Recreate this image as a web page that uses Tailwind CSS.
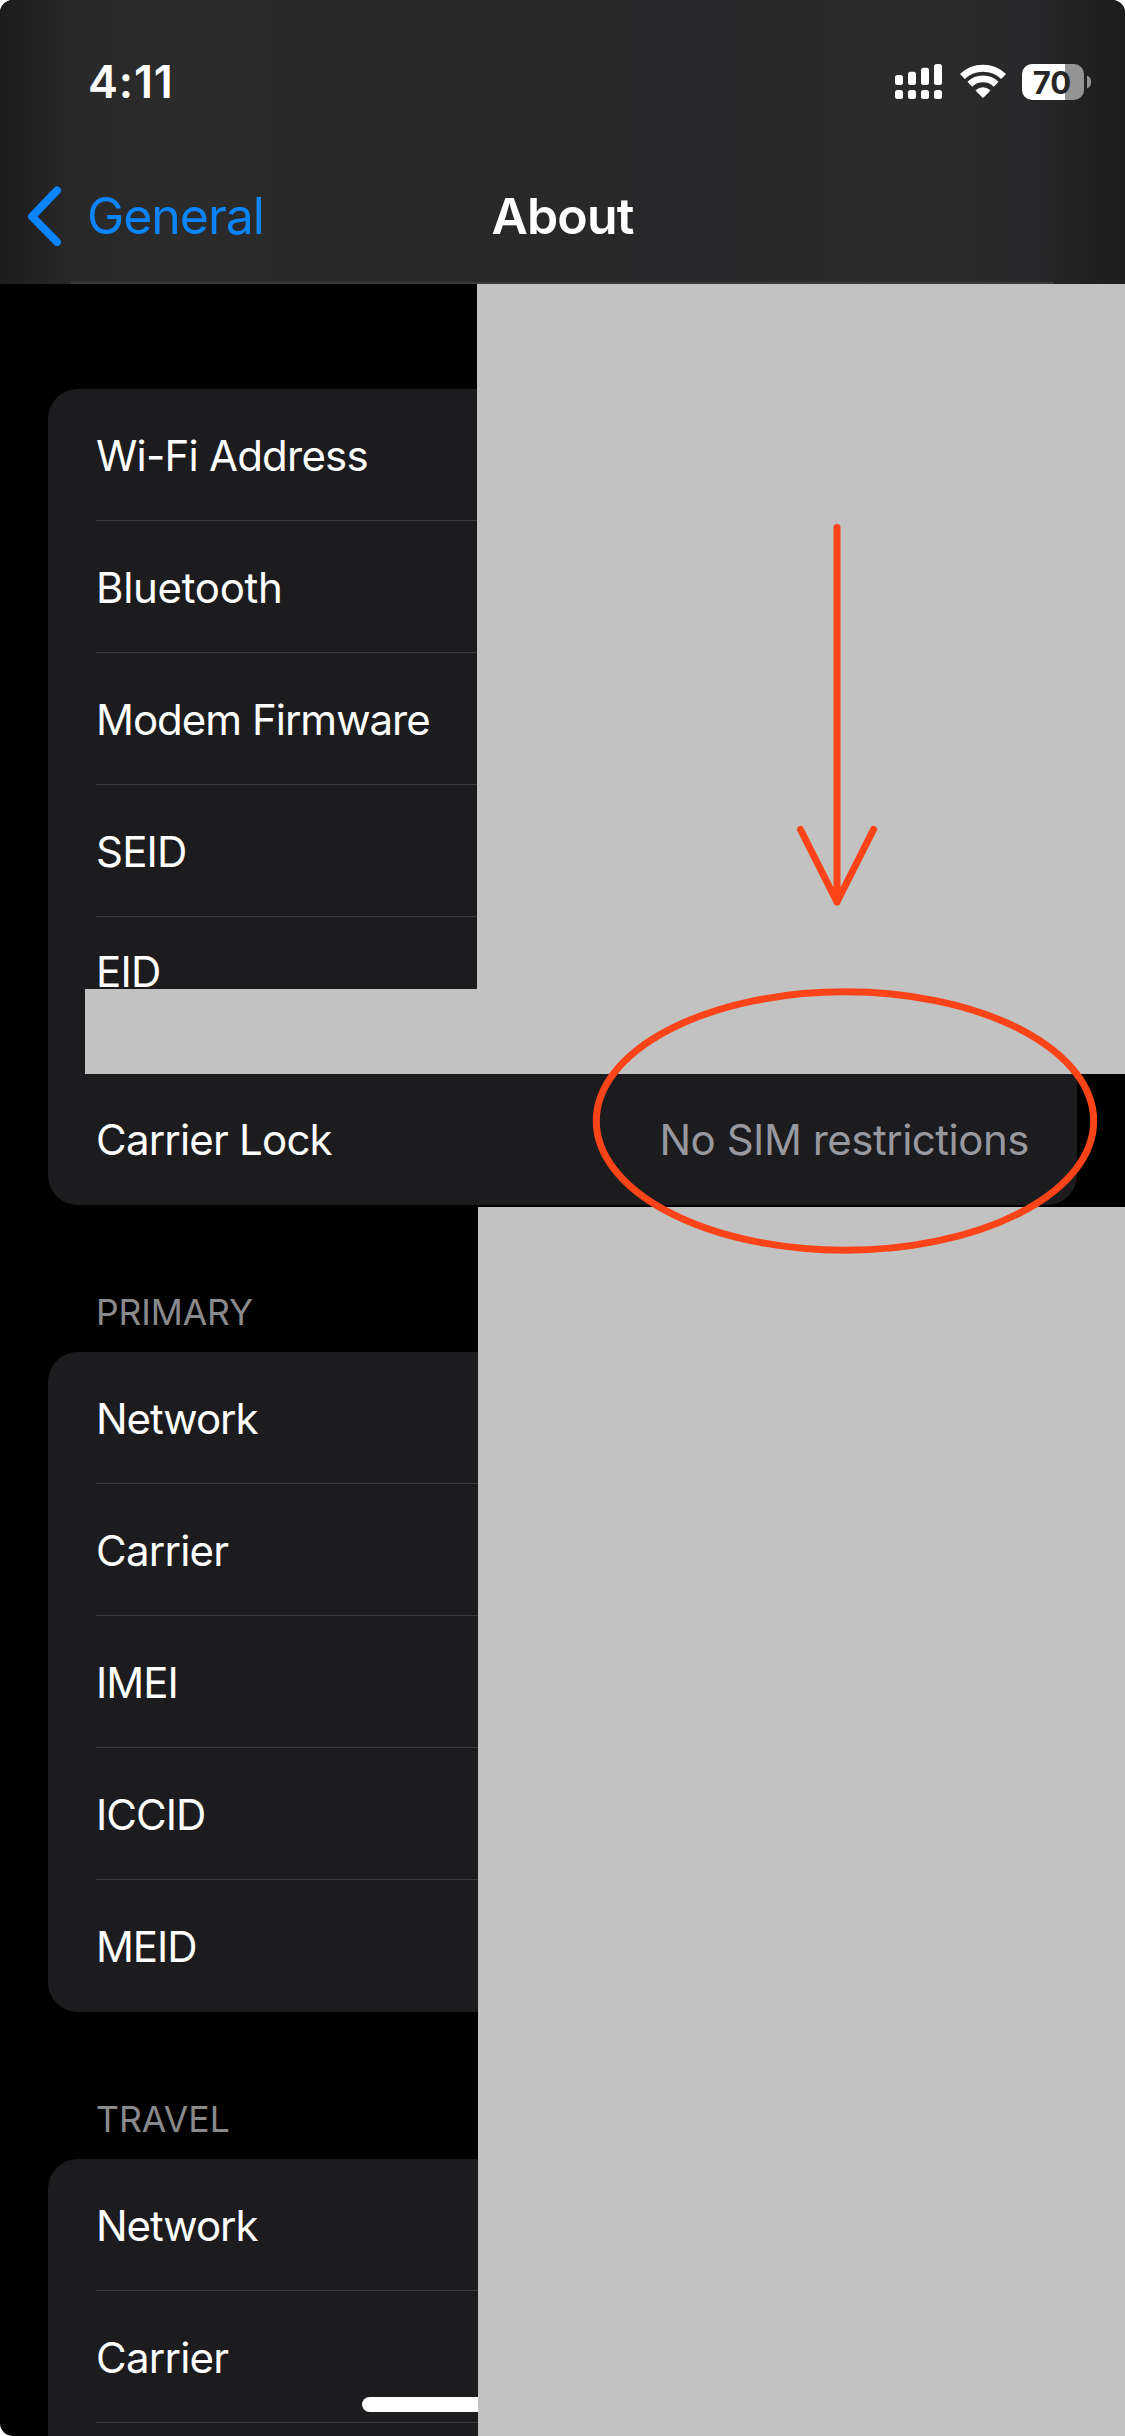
<!DOCTYPE html>
<html lang="en">
<head>
<meta charset="utf-8">
<title>About</title>
<script src="https://cdn.jsdelivr.net/npm/@tailwindcss/browser@4"></script>
</head>
<body class="bg-white">
<div class="relative flex h-[2436px] w-[1125px] flex-col overflow-hidden rounded-tl-[13px] rounded-tr-[13px] rounded-bl-[13px] bg-black font-['Inter',sans-serif] text-[42px] leading-none text-white">

  <!-- Status bar and navigation bar -->
  <header class="flex h-[284px] shrink-0 flex-col bg-[linear-gradient(to_right,#1d1d1d_0px,#1f1f1f_20px,#29292a_75px,#2b2b2c_180px,#29292a_320px,#28282a_700px,#2b2b2c_930px,#28282a_1030px,#1f1f20_1100px,#1d1d1d_1125px)]">
    <div class="flex h-[163px] items-center justify-between pr-[32px] pl-[88px]">
      <span class="text-[45px] font-semibold tracking-[0.8px]">4:11</span>
      <div class="flex items-center pt-px">
        <svg class="h-[40px] w-[120px]" viewBox="893 62 120 40" fill="#fff">
          <rect x="895" y="75" width="8" height="10" rx="2.5"/>
          <rect x="908" y="71.700" width="8" height="13.300" rx="2.500"/>
          <rect x="921" y="67.700" width="8" height="17.300" rx="2.500"/>
          <rect x="934" y="64" width="8" height="21" rx="2.500"/>
          <rect x="895" y="90" width="8" height="9" rx="2.500"/>
          <rect x="908" y="90" width="8" height="9" rx="2.500"/>
          <rect x="921" y="90" width="8" height="9" rx="2.500"/>
          <rect x="934" y="90" width="8" height="9" rx="2.500"/>
          <g fill="none" stroke="#fff">
            <path d="M962.400 76.600A29.700 29.700 0 0 1 1003.600 76.600" stroke-width="7"/>
            <path d="M969.800 84.300A19 19 0 0 1 996.200 84.300" stroke-width="6.800"/>
          </g>
          <path d="M976 90.500A10.500 10.500 0 0 1 990 90.500L983 97.500Z" stroke="#fff" stroke-width="1" stroke-linejoin="round"/>
        </svg>
        <div class="ml-[9px] flex h-[36px] w-[62px] items-center justify-center overflow-hidden rounded-[10px] bg-[linear-gradient(to_right,#fff_43px,#949494_43px)] pr-[2px] text-[31px] font-bold text-[#262627]">70</div>
        <svg class="ml-[3px] h-[14px] w-[6px]" viewBox="0 0 6 14"><path d="M0 0.500C5.500 2 5.500 12 0 13.500Z" fill="#949494"/></svg>
      </div>
    </div>
    <div class="grid h-[105px] grid-cols-3 items-center">
      <div class="flex items-center gap-[25px] pl-[27px] text-[#0a84ff]">
        <svg class="h-[60px] w-[35px]" viewBox="0 0 35 60" fill="none" stroke="currentColor" stroke-width="8" stroke-linecap="round" stroke-linejoin="round"><path d="M30 4.500L5 30.500L30 56"/></svg>
        <span class="text-[50px] tracking-[-1.05px]">General</span>
      </div>
      <span class="text-center text-[50px] font-semibold tracking-[-0.9px]">About</span>
    </div>
    <div class="mx-[71px] mt-auto h-[2px] bg-[#3b3b3d]"></div>
  </header>

  <!-- Settings groups -->
  <main class="flex flex-col px-[48px] pt-[105px]">
    <ul class="flex flex-col rounded-[30px] bg-[#1c1c1e] pl-[48px]">
      <li class="flex h-[132px] items-center border-b border-[#3a3a3c] pt-[3px] tracking-[-0.78px]">Wi-Fi Address</li>
      <li class="flex h-[132px] items-center border-b border-[#3a3a3c] pt-[3px] tracking-[-0.3px]">Bluetooth</li>
      <li class="flex h-[132px] items-center border-b border-[#3a3a3c] pt-[3px] tracking-[-1px]">Modem Firmware</li>
      <li class="flex h-[132px] items-center border-b border-[#3a3a3c] pt-[3px] tracking-[-0.8px]">SEID</li>
      <li class="flex h-[156px] items-start border-b border-[#3a3a3c] pt-[34px] tracking-[-0.8px]">EID</li>
      <li class="flex h-[132px] items-center justify-between pt-[2px] pr-[48px]">
        <span class="tracking-[-0.8px]">Carrier Lock</span>
        <span class="tracking-[-0.49px] text-[#98989f]">No SIM restrictions</span>
      </li>
    </ul>

    <h2 class="flex h-[147px] items-end pb-[22px] pl-[48px] text-[35.5px] tracking-[-0.1px] text-[#8a8a8c]">PRIMARY</h2>
    <ul class="flex flex-col rounded-[30px] bg-[#1c1c1e] pl-[48px]">
      <li class="flex h-[132px] items-center border-b border-[#3a3a3c] pt-[3px] tracking-[-1.05px]">Network</li>
      <li class="flex h-[132px] items-center border-b border-[#3a3a3c] pt-[3px] tracking-[-0.75px]">Carrier</li>
      <li class="flex h-[132px] items-center border-b border-[#3a3a3c] pt-[3px] tracking-[-1px]">IMEI</li>
      <li class="flex h-[132px] items-center border-b border-[#3a3a3c] pt-[3px] tracking-[-0.95px]">ICCID</li>
      <li class="flex h-[132px] items-center pt-[2px] tracking-[-1.1px]">MEID</li>
    </ul>

    <h2 class="flex h-[147px] items-end pb-[22px] pl-[48px] text-[35.5px] text-[#8a8a8c]">TRAVEL</h2>
    <ul class="flex flex-col rounded-t-[30px] bg-[#1c1c1e] pl-[48px]">
      <li class="flex h-[132px] items-center border-b border-[#3a3a3c] pt-[3px] tracking-[-1.05px]">Network</li>
      <li class="flex h-[132px] items-center border-b border-[#3a3a3c] pt-[3px] tracking-[-0.75px]">Carrier</li>
      <li class="h-[13px]"></li>
    </ul>
  </main>

  <!-- Home indicator -->
  <div class="absolute top-[2397px] left-[362px] h-[15px] w-[401px] rounded-full bg-white"></div>

  <!-- Redaction blocks -->
  <div class="absolute top-[284px] left-[477px] h-[706px] w-[648px] bg-[#c2c2c2]"></div>
  <div class="absolute top-[989px] left-[85px] h-[85px] w-[1040px] bg-[#c2c2c2]"></div>
  <div class="absolute top-[1207px] left-[478px] h-[1229px] w-[647px] bg-[#c2c2c2]"></div>

  <!-- Arrow and circle annotations -->
  <svg class="absolute top-[500px] left-[580px] h-[780px] w-[545px]" viewBox="580 500 545 780" fill="none" stroke="#fd4418" stroke-width="7" stroke-linecap="round" stroke-linejoin="round">
    <path d="M837 527.500V902M800.500 829.500L837 902L873.500 829.500"/>
    <ellipse cx="845" cy="1121" rx="248.700" ry="129.200"/>
  </svg>
</div>
</body>
</html>
